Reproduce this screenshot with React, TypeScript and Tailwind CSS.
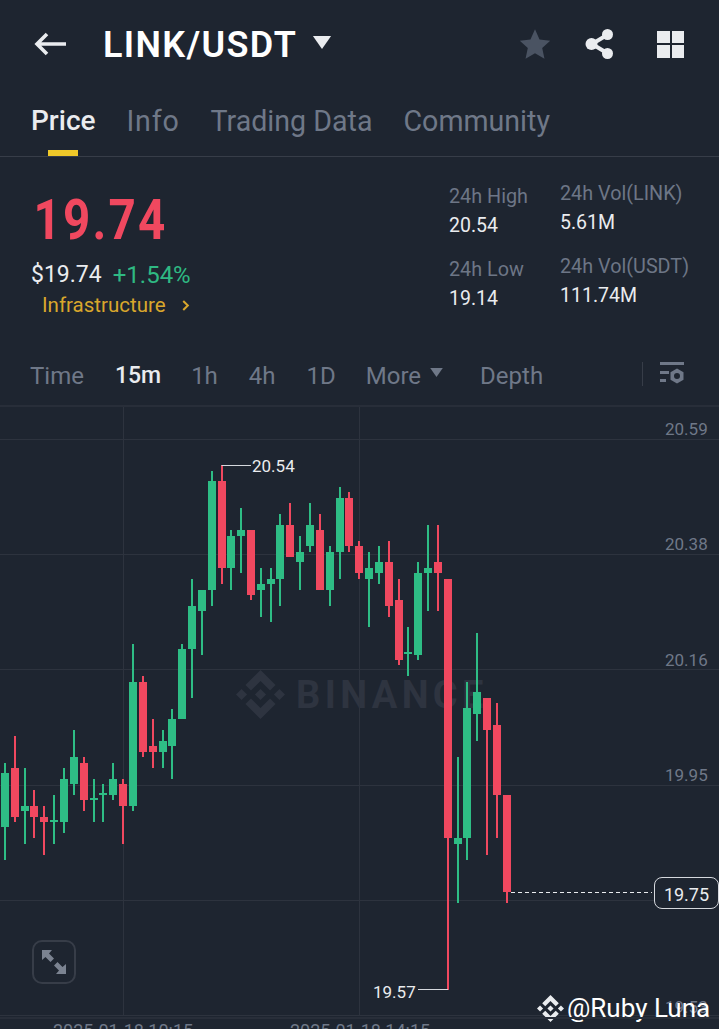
import React from 'react';

// x, wick top, wick bottom, body top, body bottom, up?
const candles: [number, number, number, number, number, boolean][] = [
    [5, 763, 860, 773, 827, true],
    [15, 736, 822, 768, 817, false],
    [25, 768, 844, 806, 811, true],
    [34, 790, 838, 806, 817, false],
    [44, 806, 855, 817, 822, false],
    [54, 795, 844, 820, 822, true],
    [64, 768, 833, 779, 822, true],
    [74, 730, 795, 757, 784, true],
    [84, 757, 811, 763, 800, false],
    [94, 779, 822, 798, 800, true],
    [103, 784, 822, 793, 795, true],
    [113, 763, 800, 779, 795, true],
    [123, 779, 844, 784, 806, false],
    [133, 644, 811, 682, 806, true],
    [143, 676, 757, 682, 752, false],
    [153, 719, 768, 746, 752, false],
    [163, 730, 768, 741, 752, true],
    [172, 709, 779, 719, 746, true],
    [182, 644, 719, 649, 719, true],
    [192, 579, 698, 606, 649, true],
    [202, 590, 655, 590, 611, true],
    [212, 471, 606, 481, 590, true],
    [222, 465, 584, 481, 568, false],
    [231, 530, 590, 536, 568, true],
    [241, 508, 573, 530, 536, true],
    [251, 530, 600, 530, 595, false],
    [261, 568, 617, 584, 590, true],
    [271, 568, 622, 579, 584, true],
    [280, 514, 606, 525, 579, true],
    [290, 503, 557, 525, 557, false],
    [300, 536, 590, 552, 562, true],
    [310, 503, 552, 525, 546, true],
    [320, 514, 590, 530, 590, false],
    [330, 546, 606, 552, 590, true],
    [340, 487, 579, 498, 552, true],
    [349, 492, 552, 498, 546, false],
    [359, 541, 579, 546, 573, false],
    [369, 552, 627, 568, 579, true],
    [379, 546, 584, 562, 573, true],
    [389, 541, 617, 562, 606, false],
    [399, 579, 665, 600, 660, false],
    [408, 627, 676, 652, 654, true],
    [418, 562, 660, 573, 655, true],
    [428, 525, 611, 568, 573, true],
    [438, 525, 611, 562, 573, false],
    [448, 579, 990, 579, 838, false],
    [458, 757, 903, 838, 844, true],
    [467, 682, 860, 708, 838, true],
    [477, 633, 741, 692, 714, true],
    [487, 698, 855, 698, 730, false],
    [497, 703, 838, 725, 795, false],
    [507, 795, 903, 795, 892, false],
];

const TOP = 405;
const gridY = [439, 554, 669, 785, 900, 1015];
const axisLabels = [
    { label: '20.59', top: 'top-[11px]' },
    { label: '20.38', top: 'top-[126px]' },
    { label: '20.16', top: 'top-[242px]' },
    { label: '19.95', top: 'top-[357px]' },
];

const BinanceMark = ({ className }: { className: string }) => (
    <svg viewBox="0 0 48 48" className={className} fill="currentColor">
        <path d="M14.678 20.17L24 10.849l9.326 9.326 5.424-5.424L24 0 9.254 14.746zM0 24l5.424-5.424L10.849 24l-5.425 5.424zM14.678 27.83L24 37.151l9.326-9.326 5.427 5.421L24 48 9.254 33.254zM37.151 24l5.425-5.424L48 24l-5.424 5.424zM29.502 24L24 18.498 18.498 24 24 29.503z" />
    </svg>
);

const Stat = ({ label, value }: { label: string; value: string }) => (
    <div className="flex flex-col gap-[4px]">
        <span className="text-[19.8px] leading-[26px] text-[#6d7686]">{label}</span>
        <span className="text-[19.5px] leading-[24px] text-[#eaecef]">{value}</span>
    </div>
);

const App = () => {
    return (
        <div className="h-[1029px] w-[719px] overflow-hidden bg-[#1e2530] font-['Roboto',sans-serif]">
            <header className="flex h-[88px] items-center pl-[34px] pr-[35px]">
                <svg viewBox="0 0 32 24" className="h-[24px] w-[32px] text-[#eaecef]" fill="none" stroke="currentColor" strokeWidth="3.6">
                    <path d="M32 12H3M13 2L3 12l10 10" />
                </svg>
                <h1 className="ml-[37px] mt-[2px] text-[36px] font-semibold leading-none tracking-[1.35px] text-white">LINK/USDT</h1>
                <svg viewBox="0 0 14 10" className="ml-[15px] mb-[4px] h-[13px] w-[20px] text-[#eaecef]" fill="currentColor">
                    <path d="M0 0h14L7 10z" />
                </svg>
                <svg viewBox="0 0 24 24" className="ml-auto h-[34px] w-[32px] text-[#4a5362]" fill="currentColor">
                    <path d="M12 1l3.4 7.6 8 .9-6 5.5 1.7 8L12 19l-7.1 4 1.7-8-6-5.5 8-.9z" />
                </svg>
                <svg viewBox="0 0 30 32" className="ml-[34px] h-[32px] w-[30px] text-[#eaecef]" fill="none" stroke="currentColor">
                    <path d="M22 7L7 16l15 9" strokeWidth="4" />
                    <circle cx="22.5" cy="6.5" r="5.5" fill="currentColor" strokeWidth="0" />
                    <circle cx="6.5" cy="16" r="6" fill="currentColor" strokeWidth="0" />
                    <circle cx="22.5" cy="25.5" r="5.5" fill="currentColor" strokeWidth="0" />
                </svg>
                <div className="ml-[42px] grid h-[27px] w-[27px] grid-cols-2 gap-[2px]">
                    <div className="bg-[#eaecef]" />
                    <div className="bg-[#eaecef]" />
                    <div className="bg-[#eaecef]" />
                    <div className="bg-[#eaecef]" />
                </div>
            </header>

            <nav className="relative flex h-[69px] items-start gap-[31px] border-b border-[#373d48] pl-[31px] pt-[15px] text-[28.6px] leading-[36px]">
                <span className="text-[28px] font-medium text-[#eaecef]">Price</span>
                <span className="tracking-[0.8px] text-[#6f7888]">Info</span>
                <span className="text-[#6f7888]">Trading Data</span>
                <span className="text-[#6f7888]">Community</span>
                <div className="absolute bottom-0 left-[48px] h-[6px] w-[30px] bg-[#f0c929]" />
            </nav>

            <section className="flex h-[192px] pl-[31px]">
                <div className="w-[418px] pt-[30px]">
                    <div className="origin-left scale-x-[0.85] pl-[3px] text-[56px] font-bold leading-[66px] tracking-[2.6px] text-[#f0485f]">19.74</div>
                    <div className="mt-[7px] flex gap-[11px] text-[23px] leading-[30px]">
                        <span className="text-[#eaecef]">$19.74</span>
                        <span className="text-[24px] text-[#2fb983]">+1.54%</span>
                    </div>
                    <div className="ml-[11px] mt-[1px] flex items-center gap-[16px] text-[20.5px] leading-[28px] text-[#d9a72c]">
                        Infrastructure
                        <svg viewBox="0 0 8 12" className="h-[11px] w-[8px]" fill="none" stroke="currentColor" strokeWidth="2.2">
                            <path d="M1 1l5 5-5 5" />
                        </svg>
                    </div>
                </div>
                <div className="w-[111px] pt-[27px]">
                    <div className="flex flex-col gap-[19px]">
                        <Stat label="24h High" value="20.54" />
                        <Stat label="24h Low" value="19.14" />
                    </div>
                </div>
                <div className="pt-[24px]">
                    <div className="flex flex-col gap-[19px]">
                        <Stat label="24h Vol(LINK)" value="5.61M" />
                        <Stat label="24h Vol(USDT)" value="111.74M" />
                    </div>
                </div>
            </section>

            <div className="relative flex h-[56px] items-start pl-[30px] pt-[11px] text-[24px] leading-[32px] text-[#6f7888]">
                <span>Time</span>
                <span className="ml-[31px] text-[23px] font-medium text-[#eaecef]">15m</span>
                <span className="ml-[30px]">1h</span>
                <span className="ml-[31px]">4h</span>
                <span className="ml-[31px]">1D</span>
                <span className="ml-[30px]">More</span>
                <svg viewBox="0 0 14 10" className="ml-[9px] mt-[8px] h-[9px] w-[13px]" fill="currentColor">
                    <path d="M0 0h14L7 10z" />
                </svg>
                <span className="ml-[37px]">Depth</span>
                <div className="absolute left-[642px] top-[13px] h-[24px] w-px bg-[#373d48]" />
                <svg viewBox="0 0 24 24" className="absolute left-[660px] top-[13px] h-[24px] w-[24px] text-[#6f7888]" fill="currentColor">
                    <path d="M0 0h24v3H0zM0 9h9v3H0zM0 17h6v3H0z" />
                    <path fillRule="evenodd" d="M17 6.5l6.5 3.7v7.6L17 21.5l-6.5-3.7v-7.6zM17 11a3 3 0 100 6 3 3 0 000-6z" />
                </svg>
            </div>

            <div className="relative h-[624px] border-t-2 border-[#282e39]">
                {/* watermark sits under the candles */}
                <div className="absolute left-[236px] top-[263px] flex items-center gap-[11px] text-[#2e3440]">
                    <BinanceMark className="h-[49px] w-[49px]" />
                    <span className="text-[38px] font-bold leading-none tracking-[4.4px]">BINANCE</span>
                </div>

                <svg viewBox={`0 ${TOP + 2} 719 624`} className="absolute inset-0 h-[624px] w-[719px]">
                    {gridY.map((y) => (
                        <line key={y} x1="0" x2="719" y1={y + 0.5} y2={y + 0.5} stroke="#2d333e" strokeWidth="1" />
                    ))}
                    <line x1="123.5" x2="123.5" y1="405" y2="1015" stroke="#2d333e" />
                    <line x1="359.5" x2="359.5" y1="405" y2="1015" stroke="#2d333e" />
                    {candles.map(([x, wt, wb, bt, bb, up]) => (
                        <g key={x} fill={up ? '#2ebd85' : '#f0485f'}>
                            <rect x={x - 1} y={wt} width="2" height={wb - wt} />
                            <rect x={x - 4} y={bt} width="8" height={Math.max(bb - bt, 2)} />
                        </g>
                    ))}
                    <path d="M221.5 465.5H251" stroke="#d5d8dd" fill="none" />
                    <path d="M418 989.5H448" stroke="#d5d8dd" fill="none" />
                    <line x1="511" x2="652" y1="892.5" y2="892.5" stroke="#eaecef" strokeDasharray="4 3" />
                </svg>

                <span className="absolute left-[252px] top-[48px] text-[17px] leading-[22px] text-[#eaecef]">20.54</span>
                <span className="absolute left-[373px] top-[574px] text-[17px] leading-[22px] text-[#eaecef]">19.57</span>

                {axisLabels.map((a) => (
                    <span key={a.label} className={`absolute left-[665px] text-[17px] leading-[22px] text-[#6f7888] ${a.top}`}>
                        {a.label}
                    </span>
                ))}

                <div className="absolute left-[654px] top-[470px] flex h-[32px] w-[65px] items-center justify-center rounded-[8px] border border-[#d5d8dd] bg-[#1e2530] pt-[2px] text-[18px] text-[#eaecef]">
                    19.75
                </div>

                <div className="absolute left-[32px] top-[533px] flex h-[44px] w-[44px] items-center justify-center rounded-[10px] border-2 border-[#373d48]">
                    <svg viewBox="0 0 26 26" className="h-[26px] w-[26px] text-[#7b8391]" fill="currentColor">
                        <path d="M1 1h10L8 4.5l5 5-3.5 3.5-5-5L1 11zM25 25H15l3-3.5-5-5 3.5-3.5 5 5L25 15z" />
                    </svg>
                </div>

                <span className="absolute left-[665px] top-[589px] text-[17px] leading-[22px] text-[#6f7888]">19.53</span>
                <div className="absolute left-[537px] top-[585px] flex items-center gap-[3px] text-[#eaecef]">
                    <BinanceMark className="h-[27px] w-[27px]" />
                    <span className="text-[26px] leading-[32px] text-white">@Ruby Luna</span>
                </div>

                <div className="absolute left-0 right-0 top-[610px] border-t-2 border-[#282e39]" />
                <span className="absolute left-[53px] top-[613px] text-[18px] leading-[22px] text-[#6f7888]">2025-01-18 10:15</span>
                <span className="absolute left-[290px] top-[613px] text-[18px] leading-[22px] text-[#6f7888]">2025-01-18 14:15</span>
            </div>
        </div>
    );
};

export default App;
